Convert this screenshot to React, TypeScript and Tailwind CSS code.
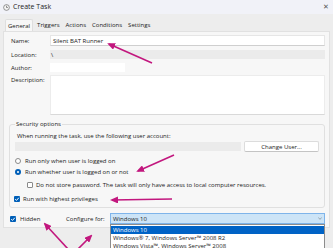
import React from "react";

const Tick = () => (
  <svg viewBox="0 0 8 8" className="w-full h-full">
    <path d="M1.6 4.2 L3.3 5.9 L6.5 2.3" fill="none" stroke="white" strokeWidth="1.3" />
  </svg>
);

const Checkbox = ({ checked }: { checked?: boolean }) =>
  checked ? (
    <span className="flex w-[6px] h-[6px] rounded-[1px] bg-[#005fb8]">
      <Tick />
    </span>
  ) : (
    <span className="block w-[6px] h-[6px] rounded-[1px] border border-[#8a8a8a] bg-white" />
  );

const Radio = ({ checked }: { checked?: boolean }) =>
  checked ? (
    <span className="flex items-center justify-center w-[6px] h-[6px] rounded-full bg-[#005fb8]">
      <span className="w-[2px] h-[2px] rounded-full bg-white" />
    </span>
  ) : (
    <span className="block w-[6px] h-[6px] rounded-full border border-[#8a8a8a] bg-white" />
  );

const tabs = ["General", "Triggers", "Actions", "Conditions", "Settings"];

const arrows = [
  { x1: 152, y1: 63, x2: 109, y2: 44 },
  { x1: 174, y1: 155, x2: 138, y2: 171 },
  { x1: 172, y1: 199, x2: 112, y2: 200 },
  { x1: 68, y1: 249, x2: 45, y2: 224 },
  { x1: 78, y1: 249, x2: 91, y2: 236 },
];

export default function App() {
  return (
    <div className="relative w-[333px] h-[248px] overflow-hidden bg-[#ededed] text-[#1b1b1b] font-['Open_Sans',sans-serif] text-[6px] leading-[8px]">
      {/* title bar */}
      <div className="flex items-center h-[14px] bg-[#f1f2f8] pl-[3px] pr-[4px]">
        <svg viewBox="0 0 8 8" className="w-[7px] h-[7px]">
          <circle cx="4" cy="4" r="3.3" fill="#f4f4f4" stroke="#6d6d6d" strokeWidth="0.8" />
          <path d="M4 2 V4 H5.6" fill="none" stroke="#4a4a4a" strokeWidth="0.7" />
        </svg>
        <span className="ml-[3px] text-[7px]">Create Task</span>
        <span className="ml-auto text-[7px] text-[#555]">✕</span>
      </div>

      {/* tabs */}
      <div className="flex items-end h-[17px] pl-[5px] gap-[2px]">
        {tabs.map((t, i) => (
          <div
            key={t}
            className={
              i === 0
                ? "h-[12px] px-[2px] flex items-center bg-[#f7f7f7] border border-b-0 border-[#dedede] rounded-t-[2px]"
                : "h-[12px] px-[2px] flex items-center"
            }
          >
            {t}
          </div>
        ))}
      </div>

      {/* panel */}
      <div className="mx-[3px] h-[197px] bg-[#f7f7f7] border border-[#e1e1e1] flex flex-col pl-[7px] pr-[4px] pt-[3px]">
        <div className="flex items-center h-[11px]">
          <span className="w-[39px]">Name:</span>
          <div className="flex-1 h-[11px] bg-white border border-[#e6e6e6] border-b-[#cfcfcf] flex items-center px-[2px]">
            Silent BAT Runner
          </div>
        </div>
        <div className="flex items-center h-[9px] mt-[4px]">
          <span className="w-[39px]">Location:</span>
          <div className="flex-1 h-[9px] bg-[#ebebeb] flex items-center px-[1px]">\</div>
        </div>
        <div className="flex items-center h-[9px] mt-[4px]">
          <span className="w-[39px]">Author:</span>
          <div className="w-[75px] h-[9px] bg-white" />
        </div>
        <div className="flex mt-[3px]">
          <span className="w-[39px] pt-[1px]">Description:</span>
          <div className="flex-1 h-[40px] bg-white border border-[#ececec] border-b-[#d9d9d9]" />
        </div>

        <fieldset className="mt-[5px] ml-[-2px] border border-[#e0e0e0] rounded-[3px] px-[5px] pb-[4px]">
          <legend className="px-[1px]">Security options</legend>
          <div className="mt-[4px] pl-[2px]">When running the task, use the following user account:</div>
          <div className="flex items-center mt-[1px] gap-[3px] h-[11px]">
            <div className="flex-1 h-[9px] bg-[#ebebeb]" />
            <div className="w-[75px] h-[11px] bg-white border border-[#dcdcdc] border-b-[#c4c4c4] rounded-[2px] flex items-center justify-center">
              Change User...
            </div>
          </div>
          <div className="flex items-center gap-[4px] h-[8px] mt-[5px]">
            <Radio />
            <span>Run only when user is logged on</span>
          </div>
          <div className="flex items-center gap-[4px] h-[8px] mt-[3px]">
            <Radio checked />
            <span>Run whether user is logged on or not</span>
          </div>
          <div className="flex items-center gap-[3px] h-[8px] mt-[5px] ml-[12px]">
            <Checkbox />
            <span>Do not store password. The task will only have access to local computer resources.</span>
          </div>
          <div className="flex items-center gap-[3px] h-[8px] mt-[6px] ml-[-1px]">
            <Checkbox checked />
            <span>Run with highest privileges</span>
          </div>
        </fieldset>

        <div className="flex items-center h-[11px] mt-[5px]">
          <div className="w-[56px] flex items-center gap-[4px] ml-[-1px]">
            <Checkbox checked />
            <span>Hidden</span>
          </div>
          <span className="w-[44px]">Configure for:</span>
          <div className="flex-1 h-[11px] bg-[#cce4f7] border border-[#7eb4ea] flex items-center px-[2px]">
            <span>Windows 10</span>
            <svg viewBox="0 0 6 4" className="ml-auto w-[4px] h-[3px]">
              <path d="M0.5 0.8 L3 3.2 L5.5 0.8" fill="none" stroke="#606060" strokeWidth="0.8" />
            </svg>
          </div>
        </div>
      </div>

      {/* open dropdown list */}
      <div className="absolute left-[110px] top-[224px] w-[215px] h-[30px] bg-white border border-[#8c8c8c] pt-[1px]">
        <div className="h-[8px] px-[2px] flex items-center bg-[#0063c6] text-white">Windows 10</div>
        <div className="h-[8px] px-[2px] flex items-center">Windows® 7, Windows Server™ 2008 R2</div>
        <div className="h-[8px] px-[2px] flex items-center">Windows Vista™, Windows Server™ 2008</div>
      </div>

      {/* annotation arrows */}
      <svg className="absolute left-0 top-0 w-[333px] h-[248px] pointer-events-none" viewBox="0 0 333 248">
        <defs>
          <marker id="ah" markerWidth="8" markerHeight="7" refX="6" refY="3.5" orient="auto" markerUnits="userSpaceOnUse">
            <path d="M0,0 L8,3.5 L0,7 z" fill="#c2177e" />
          </marker>
        </defs>
        {arrows.map((a, i) => (
          <line key={i} {...a} stroke="#c2177e" strokeWidth="1.6" markerEnd="url(#ah)" />
        ))}
      </svg>
    </div>
  );
}
